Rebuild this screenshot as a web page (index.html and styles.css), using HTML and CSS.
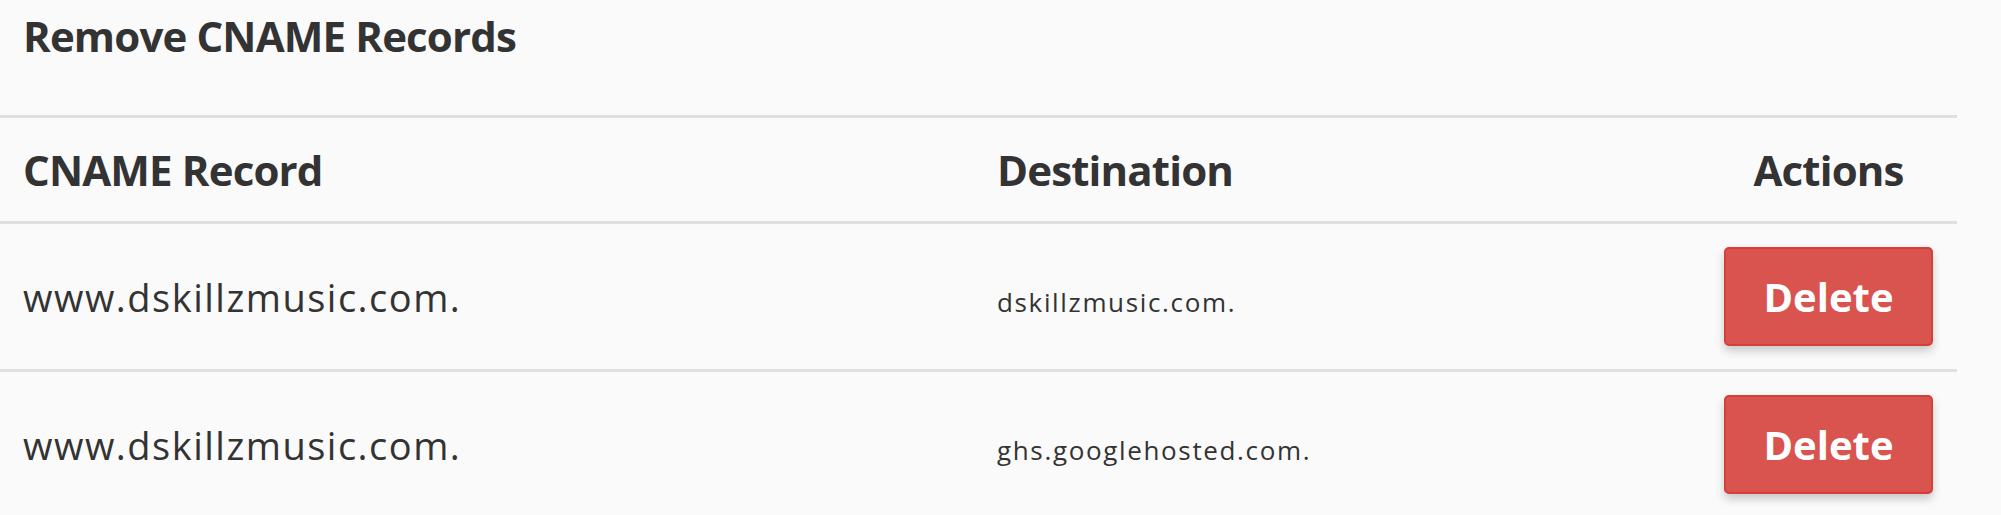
FILE: index.html
```html
<!DOCTYPE html>
<html lang="en">
<head>
  <meta charset="UTF-8">
  <title>Remove CNAME Records</title>
  <link rel="stylesheet" href="styles.css">
</head>
<body>
  <div class="section">
    <h2 class="section-title">Remove CNAME Records</h2>
    <table class="records">
      <thead>
        <tr>
          <th class="col-name">CNAME Record</th>
          <th class="col-dest">Destination</th>
          <th class="col-actions">Actions</th>
        </tr>
      </thead>
      <tbody>
        <tr>
          <td class="col-name">www.dskillzmusic.com.</td>
          <td class="col-dest">dskillzmusic.com.</td>
          <td class="col-actions"><button class="btn-delete">Delete</button></td>
        </tr>
        <tr>
          <td class="col-name">www.dskillzmusic.com.</td>
          <td class="col-dest">ghs.googlehosted.com.</td>
          <td class="col-actions"><button class="btn-delete">Delete</button></td>
        </tr>
      </tbody>
    </table>
  </div>
</body>
</html>
```

FILE: styles.css
```css
body {
  margin: 0;
  padding: 0;
  background: #fafafa;
  color: #333;
  font-family: "Open Sans", sans-serif;
  overflow: hidden;
}
.section {
  width: 1957px;
}
.section-title {
  margin: 0;
  padding: 7px 23px 0;
  height: 115px;
  box-sizing: border-box;
  font-size: 42px;
  font-weight: bold;
  letter-spacing: -0.85px;
  line-height: normal;
}
.records {
  width: 100%;
  border-collapse: collapse;
}
.records th,
.records td {
  padding: 23px;
  border-top: 3px solid #e0e0e0;
  vertical-align: baseline;
  text-align: left;
}
.records th {
  font-size: 42px;
  font-weight: bold;
  letter-spacing: -0.85px;
}
/* row text is a bit looser than the headings */
.records td.col-name {
  font-size: 38px;
  letter-spacing: 1.5px;
}
.records td.col-dest {
  font-size: 26px;
  letter-spacing: 1.65px;
}
.col-name {
  width: 928px;
}
.records .col-actions {
  text-align: center;
  width: 211px;
}
.btn-delete {
  font-family: "Open Sans", sans-serif;
  font-size: 40px;
  font-weight: bold;
  line-height: normal;
  color: #fff;
  background-color: #d9534f;
  border: 2px solid #d43f3a;
  border-radius: 5px;
  padding: 20px 37px;
  box-shadow: 0 5px 10px rgba(0, 0, 0, 0.2);
  cursor: pointer;
}
```
